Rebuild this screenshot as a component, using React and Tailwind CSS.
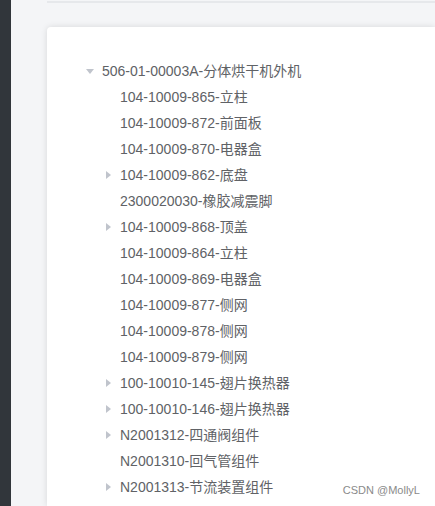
import React from "react";

const nodes = [
  { label: "104-10009-865-立柱", leaf: true },
  { label: "104-10009-872-前面板", leaf: true },
  { label: "104-10009-870-电器盒", leaf: true },
  { label: "104-10009-862-底盘", leaf: false },
  { label: "2300020030-橡胶减震脚", leaf: true },
  { label: "104-10009-868-顶盖", leaf: false },
  { label: "104-10009-864-立柱", leaf: true },
  { label: "104-10009-869-电器盒", leaf: true },
  { label: "104-10009-877-侧网", leaf: true },
  { label: "104-10009-878-侧网", leaf: true },
  { label: "104-10009-879-侧网", leaf: true },
  { label: "100-10010-145-翅片换热器", leaf: false },
  { label: "100-10010-146-翅片换热器", leaf: false },
  { label: "N2001312-四通阀组件", leaf: false },
  { label: "N2001310-回气管组件", leaf: true },
  { label: "N2001313-节流装置组件", leaf: false },
];

function Caret({ down, hidden }) {
  return (
    <span className="flex h-[24px] w-[24px] items-center justify-center">
      {hidden ? null : down ? (
        <svg width="8" height="5" viewBox="0 0 8 5">
          <path d="M0 0 L8 0 L4 5 Z" fill="#c0c4cc" />
        </svg>
      ) : (
        <svg width="5" height="8" viewBox="0 0 5 8">
          <path d="M0 0 L5 4 L0 8 Z" fill="#c0c4cc" />
        </svg>
      )}
    </span>
  );
}

function Row({ label, level, down, leaf }) {
  return (
    <div
      className="flex h-[26px] items-center"
      style={{ paddingLeft: level * 18 }}
    >
      <Caret down={down} hidden={leaf} />
      <span className="whitespace-nowrap text-[14px] text-[#606266]">{label}</span>
    </div>
  );
}

export default function App() {
  return (
    <div
      className="relative flex h-[506px] w-[435px] overflow-hidden bg-[#f4f5f7]"
      style={{ fontFamily: '"Liberation Sans", Arial, "Noto Sans CJK SC", sans-serif' }}
    >
      <div className="w-[11px] shrink-0 bg-[#31363b]" />
      <div className="flex flex-1 flex-col pl-[36px]">
        <div className="mt-px h-[2px] bg-[#e6e8eb]" />
        <div className="mt-[24px] flex-1 rounded-tl-[4px] bg-white pl-[31px] pt-[31px] shadow-[0_0_6px_rgba(0,0,0,0.12)]">
          <Row label="506-01-00003A-分体烘干机外机" level={0} down />
          {nodes.map((n) => (
            <Row key={n.label} label={n.label} level={1} leaf={n.leaf} />
          ))}
        </div>
      </div>
      <div className="absolute bottom-[8px] right-[15px] text-[11px] text-[#8a8a8a]">
        CSDN @MollyL
      </div>
    </div>
  );
}
